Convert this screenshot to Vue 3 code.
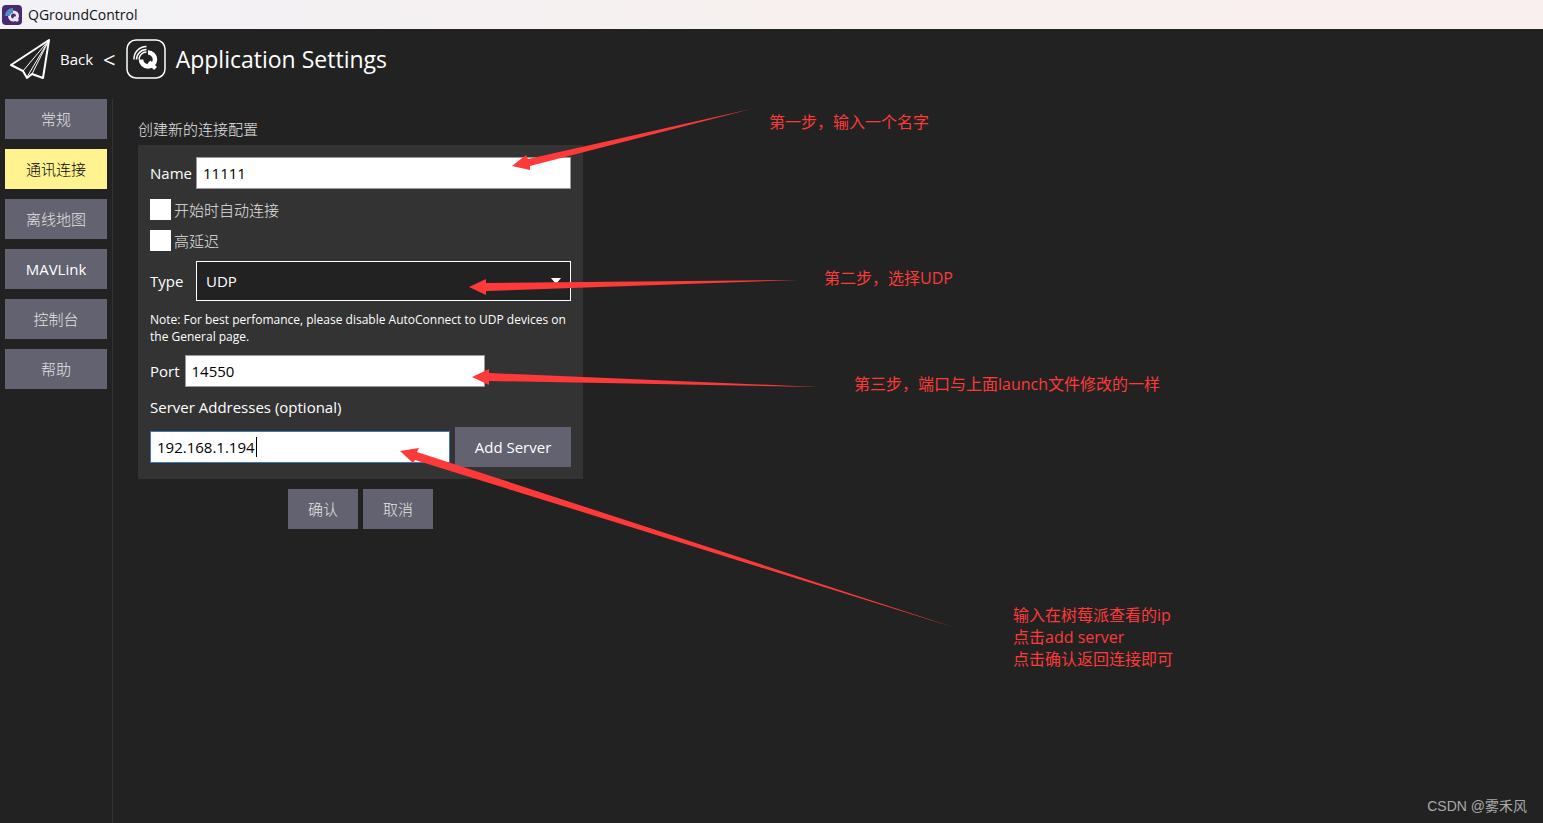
<template>
  <div class="app-window">
    <!-- 标题栏 -->
    <header class="title-bar">
      <svg class="app-icon" viewBox="0 0 20 20">
        <rect width="20" height="20" rx="4" fill="#49296f" />
        <circle cx="11.500" cy="11" r="4" fill="none" stroke="#e9e6f2" stroke-width="3" />
        <path d="m12 12 4 4" stroke="#e9e6f2" stroke-width="3" />
        <path d="M3 11a8 8 0 0 1 8-8v5a3 3 0 0 0-3 3z" fill="#4c8dc4" />
      </svg>
      <span>QGroundControl</span>
    </header>

    <!-- 工具栏 -->
    <nav class="toolbar">
      <button class="back-button">
        <svg class="plane-icon" viewBox="0 0 40 40">
          <path d="M39 1 1 26l12 6 4 7 5-4 11 4z" />
          <path class="fold" d="M39 1 13 32M39 1 17 38M39 1 22 35" />
        </svg>
        <span>Back</span>
      </button>
      <span class="separator">&lt;</span>
      <svg class="logo-icon" viewBox="0 0 40 40">
        <rect x="1" y="1" width="38" height="38" rx="9" fill="#222" stroke="#fff" stroke-width="1.500" />
        <path d="M22 13.500a7 7 0 1 1-7 7" fill="none" stroke="#fff" stroke-width="4.500" />
        <path d="m23 23 6.500 6.500" stroke="#fff" stroke-width="4" />
        <path d="M8 20.500A12.500 12.500 0 0 1 20.500 7.500M10.500 20.500a10 10 0 0 1 10-10M13 20.500a7.500 7.500 0 0 1 7.500-7.500" fill="none" stroke="#fff" stroke-width="1.500" />
      </svg>
      <h1 class="title">Application Settings</h1>
    </nav>

    <div class="body">
      <!-- 左侧菜单 -->
      <aside class="sidebar">
        <button
          v-for="item in menu"
          :key="item"
          class="menu-button"
          :class="{ active: item === current, thin: item !== 'MAVLink' }"
          @click="current = item"
        >
          {{ item }}
        </button>
      </aside>

      <!-- 连接配置 -->
      <main class="content">
        <h2 class="section-title thin">创建新的连接配置</h2>
        <form class="panel" @submit.prevent>
          <div class="row">
            <label class="key" for="name">Name</label>
            <input id="name" v-model="link.name" type="text" class="text-input grow" />
          </div>
          <label class="check thin"><input v-model="link.autoConnect" type="checkbox" />开始时自动连接</label>
          <label class="check thin"><input v-model="link.highLatency" type="checkbox" />高延迟</label>
          <div class="row">
            <label class="key" for="type">Type</label>
            <div class="select-box">
              <select id="type" v-model="link.type">
                <option v-for="type in types" :key="type">{{ type }}</option>
              </select>
              <svg class="select-arrow" viewBox="0 0 10 6"><path d="M0 0h10L5 6z" /></svg>
            </div>
          </div>
          <p class="note">Note: For best perfomance, please disable AutoConnect to UDP devices on the General page.</p>
          <div class="row">
            <label for="port">Port</label>
            <input id="port" v-model="link.port" type="text" class="text-input" />
          </div>
          <label class="server-label" for="server">Server Addresses (optional)</label>
          <div class="row">
            <div class="server-box">
              <input id="server" v-model="link.server" type="text" class="text-input active" />
              <span class="caret"></span>
            </div>
            <button type="button" class="button grow">Add Server</button>
          </div>
        </form>
        <div class="actions">
          <button class="button thin">确认</button>
          <button class="button thin">取消</button>
        </div>
      </main>
    </div>

    <!-- 步骤标注 -->
    <svg class="arrows" width="960" height="640" viewBox="0 0 960 640">
      <path d="M512 166 526 155 528 159 751 109 530 166 530 170z" />
      <path d="M469 287 486 279 486 283 798 280 486 291 486 295z" />
      <path d="M472 377 489 369 489 373 818 387 489 381 489 385z" />
      <path d="M400 451 419 448 417 452 956 628 415 460 413 463z" />
    </svg>
    <p class="mark step-one">第一步，输入一个名字</p>
    <p class="mark step-two">第二步，选择UDP</p>
    <p class="mark step-three">第三步，端口与上面launch文件修改的一样</p>
    <p class="mark step-four">输入在树莓派查看的ip<br />点击add server<br />点击确认返回连接即可</p>
    <p class="watermark">CSDN @雾禾风</p>
  </div>
</template>

<script setup>
import { ref } from 'vue';

const menu = ['常规', '通讯连接', '离线地图', 'MAVLink', '控制台', '帮助'];
const current = ref('通讯连接');

const types = ['UDP', 'TCP', 'Serial'];
const link = ref({
  name: '11111',
  autoConnect: false,
  highLatency: false,
  type: 'UDP',
  port: '14550',
  server: '192.168.1.194',
});
</script>

<style>
body {
  margin: 0;
  background: #222;
}
</style>

<style scoped>
.app-window {
  position: relative;
  display: flex;
  flex-direction: column;
  min-height: 100vh;
  box-sizing: border-box;
  overflow: hidden;
  background: #222;
  color: #fff;
  font-family: 'Open Sans', 'Noto Sans CJK SC', sans-serif;
  font-size: 15px;
  line-height: 20px;
}
button, input, select {
  box-sizing: border-box;
  margin: 0;
  font: inherit;
}
h1, h2, p { margin: 0; font-weight: 400; }

.title-bar {
  display: flex;
  align-items: center;
  gap: 6px;
  height: 29px;
  padding-left: 2px;
  background: linear-gradient(90deg, #f2f2f6 0%, #f8f0ee 60%, #f8efee 100%);
  color: #111;
  font-size: 14px;
}
.app-icon { width: 20px; height: 20px; }

.toolbar {
  display: flex;
  align-items: center;
  gap: 10px;
  height: 60px;
  padding-left: 10px;
}
.back-button {
  display: flex;
  align-items: center;
  gap: 10px;
  padding: 0;
  border: none;
  background: none;
  color: #fff;
  cursor: pointer;
}
.plane-icon { width: 40px; height: 40px; fill: none; stroke: #fff; stroke-width: 2; stroke-linejoin: round; }
.plane-icon .fold { stroke-width: 1; }
.separator { font-size: 22px; }
.logo-icon { width: 40px; height: 40px; }
.title { font-size: 23px; line-height: 32px; }

.body {
  display: flex;
  flex: 1;
  padding-top: 10px;
}
.sidebar {
  display: flex;
  flex-direction: column;
  gap: 10px;
  padding: 0 5px;
  border-right: 1px solid #333;
}
.menu-button {
  width: 102px;
  height: 40px;
  padding: 0;
  border: none;
  background: #626270;
  color: #fff;
  cursor: pointer;
}

.content {
  width: 445px;
  padding: 20px 25px;
}
.section-title { margin-bottom: 6px; font-size: 15px; line-height: 20px; }
.panel {
  display: flex;
  flex-direction: column;
  gap: 10px;
  padding: 12px;
  background: #333;
}
.row { display: flex; align-items: center; gap: 5px; }
.key { width: 41px; }
.grow { flex: 1; }
.text-input {
  width: 300px;
  height: 32px;
  padding: 0 6px;
  border: 1px solid #999;
  outline: none;
  background: #fff;
  color: #000;
}
.text-input.grow { width: auto; min-width: 0; }
.text-input.active { border-color: #3f76bd; }
.server-box { position: relative; display: flex; }
.caret {
  position: absolute;
  top: 6px;
  left: 106px;
  width: 1px;
  height: 20px;
  background: #000;
}
.check { display: flex; align-items: center; gap: 3px; height: 21px; }
.check input {
  width: 21px;
  height: 21px;
  appearance: none;
  background: #fff;
}
.check input:checked { background: #626270; border: 2px solid #fff; }
.select-box { position: relative; flex: 1; }
.select-box select {
  display: block;
  width: 100%;
  height: 40px;
  padding: 0 9px;
  border: 1px solid #fff;
  border-radius: 0;
  appearance: none;
  background: #222;
  color: #fff;
}
.select-arrow {
  position: absolute;
  top: 17px;
  right: 10px;
  width: 10px;
  height: 6px;
  fill: #fff;
  pointer-events: none;
}
.note { font-size: 12px; line-height: 17px; }
.button {
  height: 40px;
  min-width: 70px;
  padding: 0;
  border: none;
  background: #626270;
  color: #fff;
  cursor: pointer;
}
.actions {
  display: flex;
  justify-content: center;
  gap: 5px;
  margin-top: 10px;
}

/* 中文界面文字用细体 */
.thin { color: #e4e4e4; font-weight: 300; }
.menu-button.active { background: #fff291; color: #000; }

/* 红色标注浮在界面上方 */
.arrows {
  position: absolute;
  top: 0;
  left: 0;
  fill: #fd3a39;
  pointer-events: none;
}
.mark {
  position: absolute;
  color: #fd3a39;
  font-size: 16px;
  line-height: 22px;
  white-space: nowrap;
}
.step-one { top: 111px; left: 769px; }
.step-two { top: 267px; left: 824px; }
.step-three { top: 373px; left: 854px; }
.step-four { top: 604px; left: 1013px; }
.watermark {
  position: absolute;
  right: 16px;
  bottom: 7px;
  color: #aaa;
  font-family: 'Liberation Sans', 'Noto Sans CJK SC', sans-serif;
  font-size: 14px;
}
</style>
